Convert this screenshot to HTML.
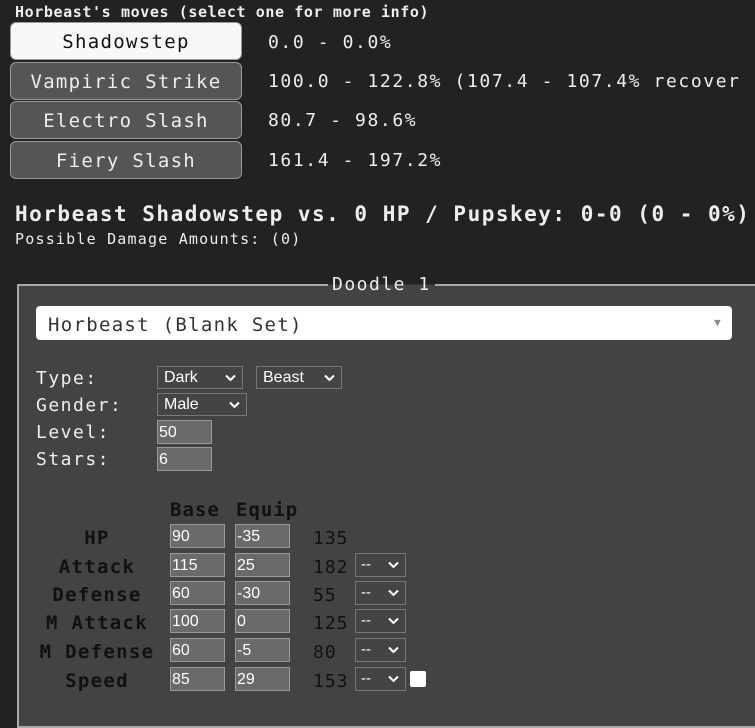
<!DOCTYPE html>
<html><head><style>
body{margin:0;width:755px;height:712px;background:#222;overflow:hidden;position:relative;font-family:"DejaVu Sans Mono","Liberation Mono",monospace;color:#eee}
.a{position:absolute;white-space:nowrap}
.btn{position:absolute;left:10px;width:230px;height:36px;border:1px solid #999;border-radius:6px;background:#555;color:#eee;font-size:19px;letter-spacing:1.3px;text-align:center;line-height:38px}
.dmg{position:absolute;left:268px;font-size:18px;letter-spacing:1.6px;line-height:20px}
.fs{position:absolute;left:17px;top:284px;width:760px;height:440px;border:2px solid #aaa;background:#434343}
.sel{position:absolute;height:23px;border:1px solid #777;background:#444;color:#fff;font-family:"Liberation Sans",sans-serif;font-size:16px;line-height:22px;padding-left:6px;box-sizing:border-box}
.sel svg,.ss svg{position:absolute;right:6px;top:7px}
.inp{position:absolute;height:24px;border:1px solid #999;background:#6a6a6a;color:#fff;font-family:"Liberation Sans",sans-serif;font-size:16px;line-height:24px;box-sizing:border-box;padding-left:1px}
.lbl{position:absolute;font-size:18px;letter-spacing:1.5px;color:#eee}
.sl{position:absolute;font-size:19px;font-weight:bold;color:#111;letter-spacing:1.3px;width:150px;text-align:center;left:22px}
.tot{position:absolute;left:313px;font-size:18px;color:#111;letter-spacing:1px}
.ss{position:absolute;left:355px;width:51px;height:24px;border:1px solid #777;background:#444;color:#fff;font-family:"Liberation Sans",sans-serif;font-size:15px;line-height:22px;padding-left:5px;box-sizing:border-box}
</style></head><body>
<div class="a" style="left:15px;top:3px;font-size:15px;font-weight:bold;letter-spacing:0.6px">Horbeast's moves (select one for more info)</div>
<div class="btn" style="top:22px;background:#f8f8f8;color:#111">Shadowstep</div>
<div class="btn" style="top:62px">Vampiric Strike</div>
<div class="btn" style="top:101px">Electro Slash</div>
<div class="btn" style="top:141px">Fiery Slash</div>
<div class="dmg" style="top:33px">0.0 - 0.0%</div>
<div class="dmg" style="top:72px">100.0 - 122.8% (107.4 - 107.4% recover</div>
<div class="dmg" style="top:111px">80.7 - 98.6%</div>
<div class="dmg" style="top:151px">161.4 - 197.2%</div>
<div class="a" style="left:15px;top:202px;font-size:21px;font-weight:bold;letter-spacing:1.5px">Horbeast Shadowstep vs. 0 HP / Pupskey: 0-0 (0 - 0%)</div>
<div class="a" style="left:15px;top:230px;font-size:15px;letter-spacing:1.2px">Possible Damage Amounts: (0)</div>
<div class="fs"></div>
<div class="a" style="left:328px;top:274px;padding:0 4px;font-size:18px;letter-spacing:1.5px;background:linear-gradient(#222 50%,#434343 50%)">Doodle 1</div>
<div class="a" style="left:36px;top:306px;width:696px;height:34px;background:#fff;border-radius:4px;color:#333;font-size:19px;line-height:38px;text-indent:12px;letter-spacing:1.3px">Horbeast (Blank Set)<span style="position:absolute;right:10px;top:-2px;font-size:11px;color:#888">▼</span></div>
<div class="lbl" style="left:36px;top:368px">Type:</div>
<div class="lbl" style="left:36px;top:395px">Gender:</div>
<div class="lbl" style="left:36px;top:422px">Level:</div>
<div class="lbl" style="left:36px;top:449px">Stars:</div>
<div class="sel" style="left:157px;top:366px;width:86px">Dark<svg width="11" height="8"><path d="M1 1.5L5.5 6L10 1.5" stroke="#fff" stroke-width="2" fill="none"/></svg></div>
<div class="sel" style="left:256px;top:366px;width:86px">Beast<svg width="11" height="8"><path d="M1 1.5L5.5 6L10 1.5" stroke="#fff" stroke-width="2" fill="none"/></svg></div>
<div class="sel" style="left:157px;top:393px;width:90px">Male<svg width="11" height="8"><path d="M1 1.5L5.5 6L10 1.5" stroke="#fff" stroke-width="2" fill="none"/></svg></div>
<div class="inp" style="left:157px;top:420px;width:55px">50</div>
<div class="inp" style="left:157px;top:447px;width:55px">6</div>
<div class="a" style="left:170px;top:499px;font-size:19px;font-weight:bold;color:#111;letter-spacing:1px">Base</div>
<div class="a" style="left:236px;top:499px;font-size:19px;font-weight:bold;color:#111;letter-spacing:1px">Equip</div>

<div class="sl" style="top:527px">HP</div>
<div class="inp" style="left:170px;top:524px;width:55px">90</div>
<div class="inp" style="left:235px;top:524px;width:55px">-35</div>
<div class="tot" style="top:528px">135</div>

<div class="sl" style="top:556px">Attack</div>
<div class="inp" style="left:170px;top:553px;width:55px">115</div>
<div class="inp" style="left:235px;top:553px;width:55px">25</div>
<div class="tot" style="top:557px">182</div>
<div class="ss" style="top:553px">--<svg width="11" height="8"><path d="M1 1.5L5.5 6L10 1.5" stroke="#fff" stroke-width="2" fill="none"/></svg></div>

<div class="sl" style="top:584px">Defense</div>
<div class="inp" style="left:170px;top:581px;width:55px">60</div>
<div class="inp" style="left:235px;top:581px;width:55px">-30</div>
<div class="tot" style="top:585px">55</div>
<div class="ss" style="top:581px">--<svg width="11" height="8"><path d="M1 1.5L5.5 6L10 1.5" stroke="#fff" stroke-width="2" fill="none"/></svg></div>

<div class="sl" style="top:612px">M Attack</div>
<div class="inp" style="left:170px;top:609px;width:55px">100</div>
<div class="inp" style="left:235px;top:609px;width:55px">0</div>
<div class="tot" style="top:613px">125</div>
<div class="ss" style="top:609px">--<svg width="11" height="8"><path d="M1 1.5L5.5 6L10 1.5" stroke="#fff" stroke-width="2" fill="none"/></svg></div>

<div class="sl" style="top:641px">M Defense</div>
<div class="inp" style="left:170px;top:638px;width:55px">60</div>
<div class="inp" style="left:235px;top:638px;width:55px">-5</div>
<div class="tot" style="top:642px">80</div>
<div class="ss" style="top:638px">--<svg width="11" height="8"><path d="M1 1.5L5.5 6L10 1.5" stroke="#fff" stroke-width="2" fill="none"/></svg></div>

<div class="sl" style="top:670px">Speed</div>
<div class="inp" style="left:170px;top:667px;width:55px">85</div>
<div class="inp" style="left:235px;top:667px;width:55px">29</div>
<div class="tot" style="top:671px">153</div>
<div class="ss" style="top:667px">--<svg width="11" height="8"><path d="M1 1.5L5.5 6L10 1.5" stroke="#fff" stroke-width="2" fill="none"/></svg></div>
<div class="a" style="left:410px;top:671px;width:16px;height:16px;background:#fff;border-radius:2px"></div>
</body></html>
